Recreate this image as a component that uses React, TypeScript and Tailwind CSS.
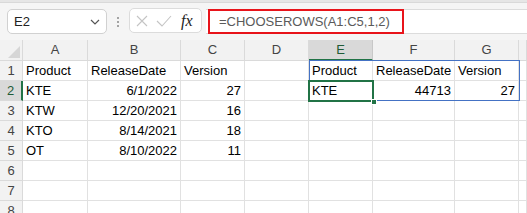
import React from 'react';

const cols = [
  { name: 'A', w: 65 },
  { name: 'B', w: 93 },
  { name: 'C', w: 64 },
  { name: 'D', w: 64 },
  { name: 'E', w: 64 },
  { name: 'F', w: 82 },
  { name: 'G', w: 64 },
  { name: '', w: 8 },
];

type Cell = { v: string; right?: boolean };

const data: Record<number, Record<string, Cell>> = {
  1: { A: { v: 'Product' }, B: { v: 'ReleaseDate' }, C: { v: 'Version' }, E: { v: 'Product' }, F: { v: 'ReleaseDate' }, G: { v: 'Version' } },
  2: { A: { v: 'KTE' }, B: { v: '6/1/2022', right: true }, C: { v: '27', right: true }, E: { v: 'KTE' }, F: { v: '44713', right: true }, G: { v: '27', right: true } },
  3: { A: { v: 'KTW' }, B: { v: '12/20/2021', right: true }, C: { v: '16', right: true } },
  4: { A: { v: 'KTO' }, B: { v: '8/14/2021', right: true }, C: { v: '18', right: true } },
  5: { A: { v: 'OT' }, B: { v: '8/10/2022', right: true }, C: { v: '11', right: true } },
};

const rows = [1, 2, 3, 4, 5, 6, 7, 8];

export default function App() {
  return (
    <div className="w-[527px] h-[213px] overflow-hidden bg-white text-[#000]" style={{ fontFamily: '"Liberation Sans", Arial, sans-serif' }}>
      {/* top strip */}
      <div className="h-[3px] bg-[#e6e6e6] border-b border-[#d9d9d9]" />

      {/* formula bar */}
      <div className="h-[37px] bg-[#f5f5f5] flex items-start pt-[6px] pl-[7px]">
        <div className="w-[100px] h-[25px] bg-white border border-[#d1d1d1] rounded-[5px] flex items-center justify-between pl-[6px] pr-[6px]">
          <span className="text-[13px] text-[#222]">E2</span>
          <svg width="10" height="6" viewBox="0 0 10 6"><path d="M1 1 L5 5 L9 1" fill="none" stroke="#555" strokeWidth="1.2" /></svg>
        </div>
        <div className="w-[22px] h-[25px] flex flex-col items-center justify-center gap-[2px]">
          <span className="w-[2px] h-[2px] bg-[#888] rounded-full" />
          <span className="w-[2px] h-[2px] bg-[#888] rounded-full" />
          <span className="w-[2px] h-[2px] bg-[#888] rounded-full" />
        </div>
        <div className="w-[73px] h-[25px] -mt-[1px] bg-white border border-[#dcdcdc] rounded-[5px] flex items-center pl-[5px] gap-[7px]">
          <svg width="14" height="14" viewBox="0 0 14 14"><path d="M2 2 L12 12 M12 2 L2 12" stroke="#c4c4c4" strokeWidth="1.1" /></svg>
          <svg width="16" height="14" viewBox="0 0 16 14"><path d="M1 7 L6 12 L15 2" fill="none" stroke="#c4c4c4" strokeWidth="1.1" /></svg>
          <span className="text-[16px] italic text-[#222] ml-[2px]" style={{ fontFamily: '"Liberation Serif", "Times New Roman", serif' }}>
            fx
          </span>
        </div>
        <div className="flex-1 ml-[4px] h-[25px] bg-white border-y border-[#dcdcdc] flex items-center">
          <div className="w-[196px] h-[25px] border-2 border-[#e8141b] flex items-center pl-[9px] ml-[2px]">
            <span className="text-[13px] text-[#5a5a5a]">=CHOOSEROWS(A1:C5,1,2)</span>
          </div>
        </div>
      </div>

      {/* grid */}
      <div className="relative">
        {/* column headers */}
        <div className="flex h-[21px] bg-[#f2f2f2]">
          <div className="w-[23px] h-[21px] border-r border-b border-[#dadada] relative shrink-0">
            <svg className="absolute right-[2px] bottom-[2px]" width="12" height="12" viewBox="0 0 12 12"><path d="M12 0 L12 12 L0 12 Z" fill="#d6d6d6" /></svg>
          </div>
          {cols.map((c, i) => (
            <div
              key={i}
              style={{ width: c.w }}
              className={
                c.name === 'E'
                  ? 'shrink-0 h-[21px] bg-[#d9d9d9] border-r border-[#c8c8c8] border-b-2 border-b-[#217346] flex items-center justify-center text-[13px] text-[#1f5b37]'
                  : 'shrink-0 h-[21px] border-r border-b border-[#dadada] flex items-center justify-center text-[13px] text-[#444]'
              }
            >
              {c.name}
            </div>
          ))}
        </div>

        {rows.map((r) => (
          <div key={r} className="flex h-[20px]">
            <div
              className={
                r === 2
                  ? 'w-[23px] shrink-0 h-[20px] bg-[#d9d9d9] border-r-2 border-[#217346] border-b border-b-[#dadada] flex items-center justify-center text-[13px] text-[#1f5b37]'
                  : 'w-[23px] shrink-0 h-[20px] bg-[#f2f2f2] border-r border-b border-[#dadada] flex items-center justify-center text-[13px] text-[#444]'
              }
            >
              {r}
            </div>
            {cols.map((c, i) => {
              const cell = data[r]?.[c.name];
              return (
                <div
                  key={i}
                  style={{ width: c.w }}
                  className={
                    cell?.right
                      ? 'shrink-0 h-[20px] border-r border-b border-[#e1e1e1] flex items-center justify-end pr-[3px] text-[13px] whitespace-nowrap'
                      : 'shrink-0 h-[20px] border-r border-b border-[#e1e1e1] flex items-center pl-[3px] text-[13px] whitespace-nowrap'
                  }
                >
                  {cell?.v}
                </div>
              );
            })}
          </div>
        ))}

        {/* spill range outline E1:G2 */}
        <div className="absolute left-[309px] top-[20px] w-[211px] h-[41px] border border-[#4472c4] pointer-events-none" />
        {/* active cell E2 */}
        <div className="absolute left-[308px] top-[40px] w-[66px] h-[22px] border-2 border-[#217346] pointer-events-none" />
        <div className="absolute left-[371px] top-[59px] w-[6px] h-[6px] bg-[#217346] border border-white pointer-events-none" />
      </div>
    </div>
  );
}
